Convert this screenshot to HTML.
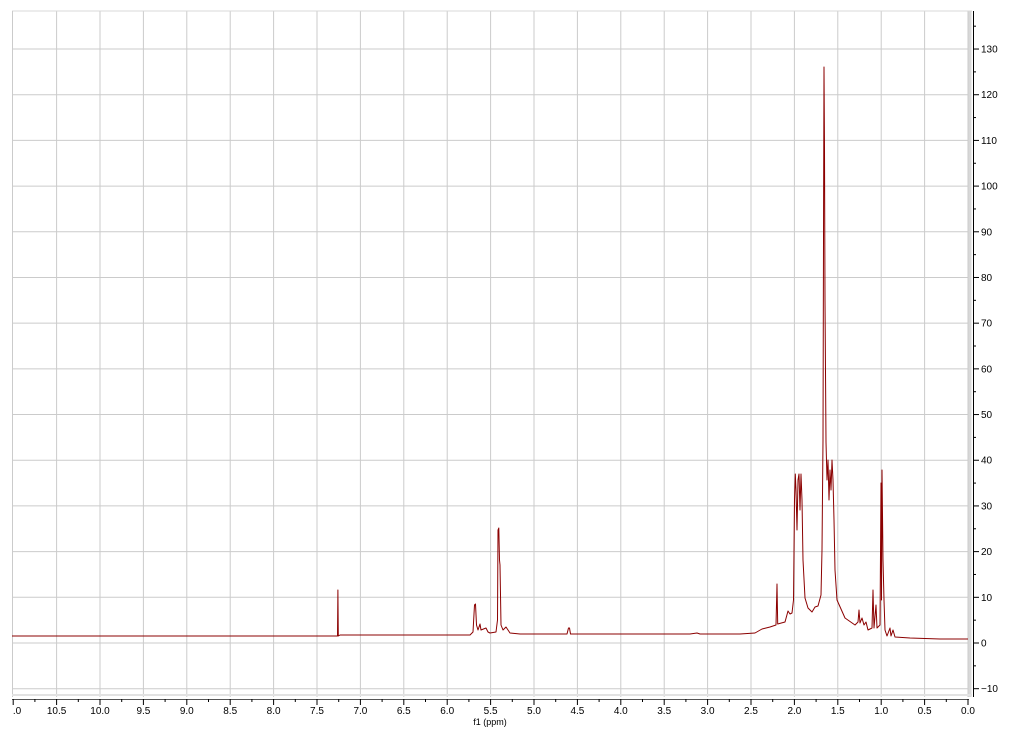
<!DOCTYPE html>
<html><head><meta charset="utf-8"><style>
html,body{margin:0;padding:0;background:#fff;width:1024px;height:734px;overflow:hidden}
svg{display:block}
text{font-family:"Liberation Sans",sans-serif;font-size:10px;fill:#000}
</style></head><body>
<svg width="1024" height="734" viewBox="0 0 1024 734" xmlns="http://www.w3.org/2000/svg">
<g id="grid" stroke="#cbcbcb" stroke-width="1"></g>
<line x1="12" y1="11" x2="972" y2="11" stroke="#d8d8d8"/>
<line x1="12.5" y1="11" x2="12.5" y2="697" stroke="#cbcbcb"/>
<line x1="970" y1="11" x2="970" y2="697" stroke="#d8d8d8" stroke-width="3"/>
<line x1="12" y1="695" x2="972" y2="695" stroke="#e2e2e2" stroke-width="2"/>
<line x1="973.5" y1="11" x2="973.5" y2="697" stroke="#000"/>
<line x1="12" y1="699.5" x2="969" y2="699.5" stroke="#555"/>
<g id="ax"></g>
<polyline fill="none" stroke="#8b0000" stroke-width="1" stroke-linejoin="round" points="12,636 335,636 337.5,636 337.9,590 338.3,636 340,635 470,635 473,632 474.5,605 475.5,604 476.5,625 478,630 480,624 481,630 486,628 488,632 490,633 496,632 497.5,620 498,530 498.8,528 499.5,560 500,565 501,625 503,630 506,627 510,633 520,634 567,634 568.5,628 569.5,628 570.5,634 690,634 697,633 700,634 740,634 755,633 762,629 770,627 776,625 777,584 777.7,624 785,622 788,611 790,614 792,613 793.5,600 794.5,500 795.3,474 796,490 797,530 798,480 799,474 800,510 801,474 802,500 803,560 805,598 808,608 812,612 815,607 818,606 821,595 822,550 823,440 823.6,200 824,67 824.5,150 825,300 826,442 827,480 828,460 829,500 830,470 831,490 832,460 833,480 834,520 835,570 837,600 845,618 855,625 858,622 859,610 860,623 862,618 864,625 866,622 868,630 872,628 873,590 874,628 876,605 877,628 880,625 881,483 881.5,600 882,470 883,560 884,600 885,630 887,636 890,628 891,636 893,630 895,637 910,638 940,639 968,639"/>
<text x="490" y="725" text-anchor="middle" style="font-size:9px">f1 (ppm)</text>
</svg>
<script>
var ns="http://www.w3.org/2000/svg",g=document.getElementById('grid'),a=document.getElementById('ax');
function el(p,t,at){var e=document.createElementNS(ns,t);for(var k in at)e.setAttribute(k,at[k]);p.appendChild(e);return e;}
for(var k=0;k<=21;k++){var x=968-43.4*k;el(g,'line',{x1:x,y1:11,x2:x,y2:697});}
for(var v=-10;v<=130;v+=10){var y=643-4.569*v;el(g,'line',{x1:12,y1:y,x2:969,y2:y});
el(a,'line',{x1:973,y1:y,x2:979,y2:y,stroke:'#000'});
var t=el(a,'text',{x:981,y:y+3.5});t.textContent=(v<0?'\u221210':v);}
for(var v=-5;v<=135;v+=10){var y=643-4.569*v;el(a,'line',{x1:973,y1:y,x2:976,y2:y,stroke:'#000'});}
for(var k=0;k<=22;k++){var x=968-43.4*k;el(a,'line',{x1:x,y1:699,x2:x,y2:705,stroke:'#000'});
var x2=968-43.4*k-21.7;if(k<22)el(a,'line',{x1:x2,y1:699,x2:x2,y2:702,stroke:'#000'});
var s=(k*0.5).toFixed(1);var t=el(a,'text',{x:(k==22?17:x),y:714,'text-anchor':'middle'});t.textContent=(k==22?'.0':s);}
</script>
</body></html>
